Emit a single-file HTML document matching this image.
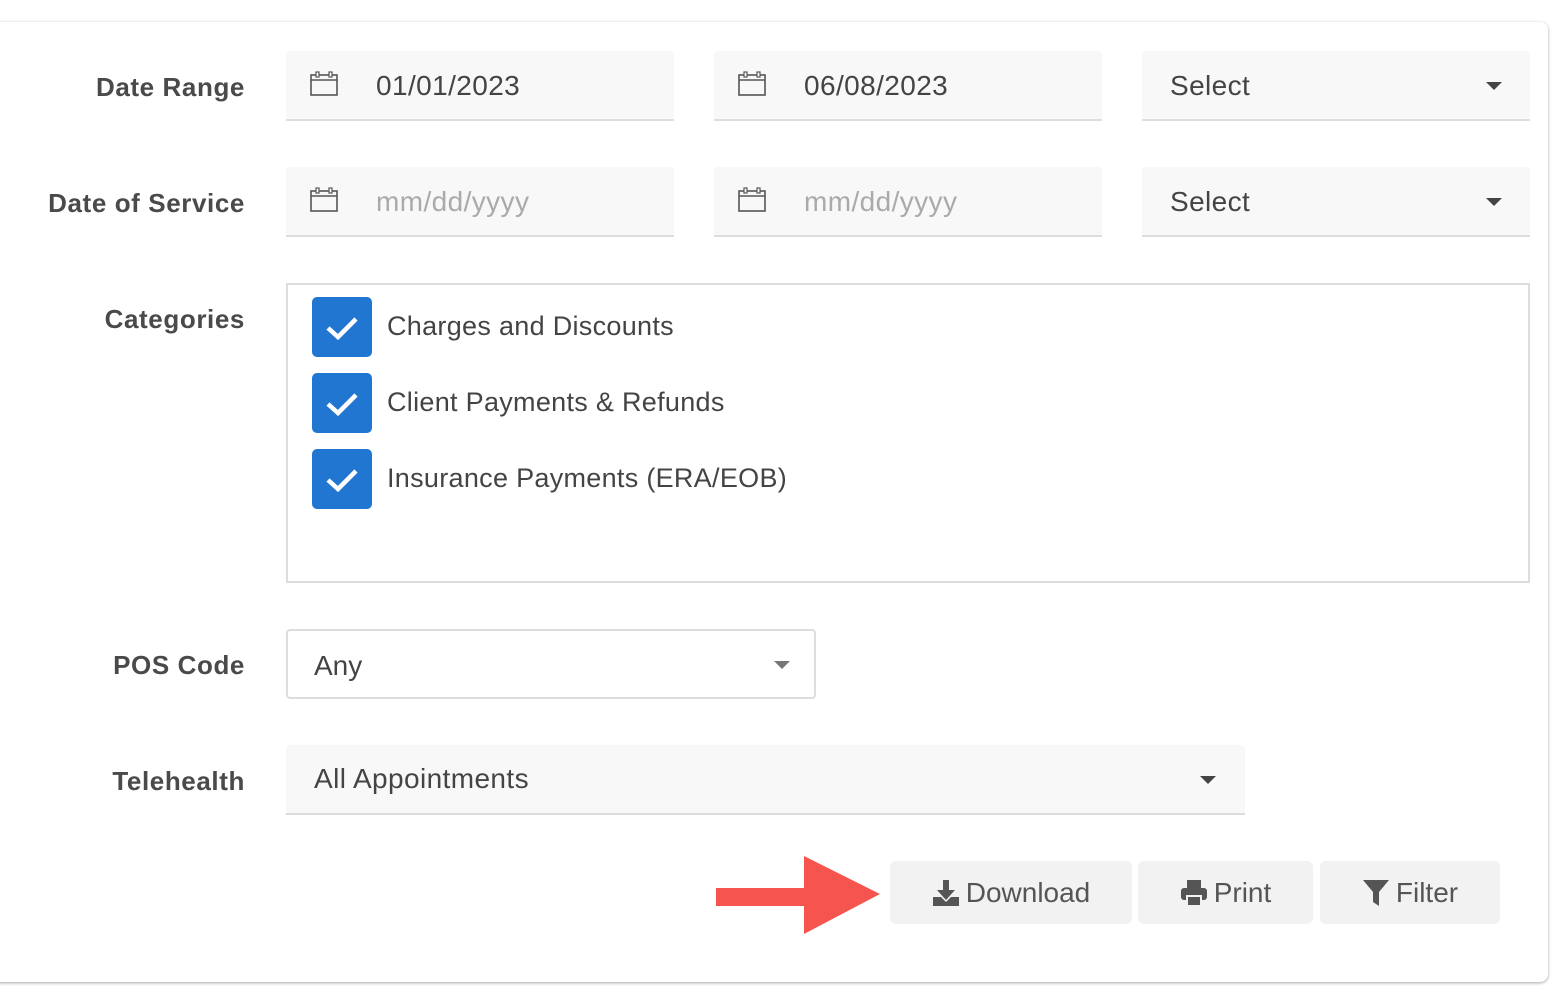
<!DOCTYPE html>
<html><head><style>
body{margin:0;width:1568px;height:994px;background:#fff;font-family:"Liberation Sans",sans-serif;position:relative;overflow:hidden}
.card{position:absolute;left:-10px;top:22px;width:1558px;height:960px;background:#fff;border-radius:8px;box-shadow:0 1px 3px rgba(0,0,0,.35)}
.lbl{position:absolute;right:1323px;font-weight:bold;font-size:26px;color:#4a4a4a;letter-spacing:0.6px}
.inp{position:absolute;background:#f8f8f8;border-bottom:2px solid #ddd;border-radius:4px 4px 0 0;height:70px;box-sizing:border-box;font-size:28px;color:#444;letter-spacing:0.4px}
.inp span{position:absolute;top:19px}
.cal{position:absolute;left:22px;top:20px}
.ph{color:#aaa}
.caret{position:absolute;width:0;height:0;border-left:8px solid transparent;border-right:8px solid transparent;border-top:8px solid #444}
.cb{position:absolute;left:312px;width:60px;height:60px;background:#2176d2;border-radius:5px}
.cbt{position:absolute;left:387px;font-size:27px;color:#444;letter-spacing:0.3px}
.btn{position:absolute;top:861px;height:63px;background:#f2f2f2;border-radius:6px;font-size:28px;color:#555;display:flex;align-items:center;justify-content:center;gap:6px}
</style></head><body>
<div class="card"></div>
<div class="lbl" style="top:72px">Date Range</div>
<div class="lbl" style="top:188px">Date of Service</div>
<div class="lbl" style="top:304px">Categories</div>
<div class="lbl" style="top:650px">POS Code</div>
<div class="lbl" style="top:766px">Telehealth</div>

<svg width="0" height="0" style="position:absolute"><defs><g id="c"><rect x="1" y="4" width="26" height="20" fill="none" stroke="#555" stroke-width="1.6"/><line x1="1" y1="9" x2="27" y2="9" stroke="#555" stroke-width="1.6"/><rect x="6" y="1" width="3" height="5" fill="#fff" stroke="#555" stroke-width="1.2"/><rect x="19" y="1" width="3" height="5" fill="#fff" stroke="#555" stroke-width="1.2"/></g></defs></svg>

<div class="inp" style="left:286px;top:51px;width:388px"><svg class="cal" width="30" height="28" style="left:24px"><use href="#c"/></svg><span style="left:90px">01/01/2023</span></div>
<div class="inp" style="left:714px;top:51px;width:388px"><svg class="cal" width="30" height="28" style="left:24px"><use href="#c"/></svg><span style="left:90px">06/08/2023</span></div>
<div class="inp" style="left:1142px;top:51px;width:388px"><span style="left:28px">Select</span><div class="caret" style="left:344px;top:31px"></div></div>
<div class="inp" style="left:286px;top:167px;width:388px"><svg class="cal" width="30" height="28" style="left:24px"><use href="#c"/></svg><span class="ph" style="left:90px">mm/dd/yyyy</span></div>
<div class="inp" style="left:714px;top:167px;width:388px"><svg class="cal" width="30" height="28" style="left:24px"><use href="#c"/></svg><span class="ph" style="left:90px">mm/dd/yyyy</span></div>
<div class="inp" style="left:1142px;top:167px;width:388px"><span style="left:28px">Select</span><div class="caret" style="left:344px;top:31px"></div></div>

<div style="position:absolute;left:286px;top:283px;width:1244px;height:300px;box-sizing:border-box;border:2px solid #ddd"></div>
<div class="cb" style="top:297px"><svg width="60" height="60"><path d="M16 31 L26 40 L44 22" fill="none" stroke="#fff" stroke-width="4.5"/></svg></div>
<div class="cbt" style="top:311px">Charges and Discounts</div>
<div class="cb" style="top:373px"><svg width="60" height="60"><path d="M16 31 L26 40 L44 22" fill="none" stroke="#fff" stroke-width="4.5"/></svg></div>
<div class="cbt" style="top:387px">Client Payments &amp; Refunds</div>
<div class="cb" style="top:449px"><svg width="60" height="60"><path d="M16 31 L26 40 L44 22" fill="none" stroke="#fff" stroke-width="4.5"/></svg></div>
<div class="cbt" style="top:463px">Insurance Payments (ERA/EOB)</div>

<div style="position:absolute;left:286px;top:629px;width:530px;height:70px;box-sizing:border-box;border:2px solid #ddd;border-radius:4px;font-size:28px;color:#444"><span style="position:absolute;left:26px;top:19px">Any</span><div class="caret" style="left:486px;top:30px;border-top-color:#777"></div></div>

<div class="inp" style="left:286px;top:745px;width:959px;height:70px"><span style="left:28px;top:18px">All Appointments</span><div class="caret" style="left:914px;top:31px"></div></div>

<svg style="position:absolute;left:716px;top:856px" width="168" height="80"><polygon points="0,32 88,32 88,0 164,38 88,78 88,50 0,50" fill="#f5544f"/></svg>

<div class="btn" style="left:890px;width:242px"><svg width="28" height="28" viewBox="0 0 28 28"><rect x="11" y="1" width="6" height="12" fill="#555"/><polygon points="5,11 23,11 14,21" fill="#555"/><path d="M1 18 H9 L14 23 L19 18 H27 V27 H1Z" fill="#555"/></svg>Download</div>
<div class="btn" style="left:1138px;width:175px"><svg width="28" height="28" viewBox="0 0 28 28"><rect x="7" y="1" width="14" height="8" fill="#555"/><rect x="1" y="9" width="26" height="12" rx="3" fill="#555"/><rect x="7" y="17" width="14" height="10" fill="#555" stroke="#f2f2f2" stroke-width="2"/></svg>Print</div>
<div class="btn" style="left:1320px;width:180px"><svg width="28" height="28" viewBox="0 0 28 28"><path d="M1 1 H27 L17 13 V27 L11 23 V13Z" fill="#555"/></svg>Filter</div>
</body></html>
